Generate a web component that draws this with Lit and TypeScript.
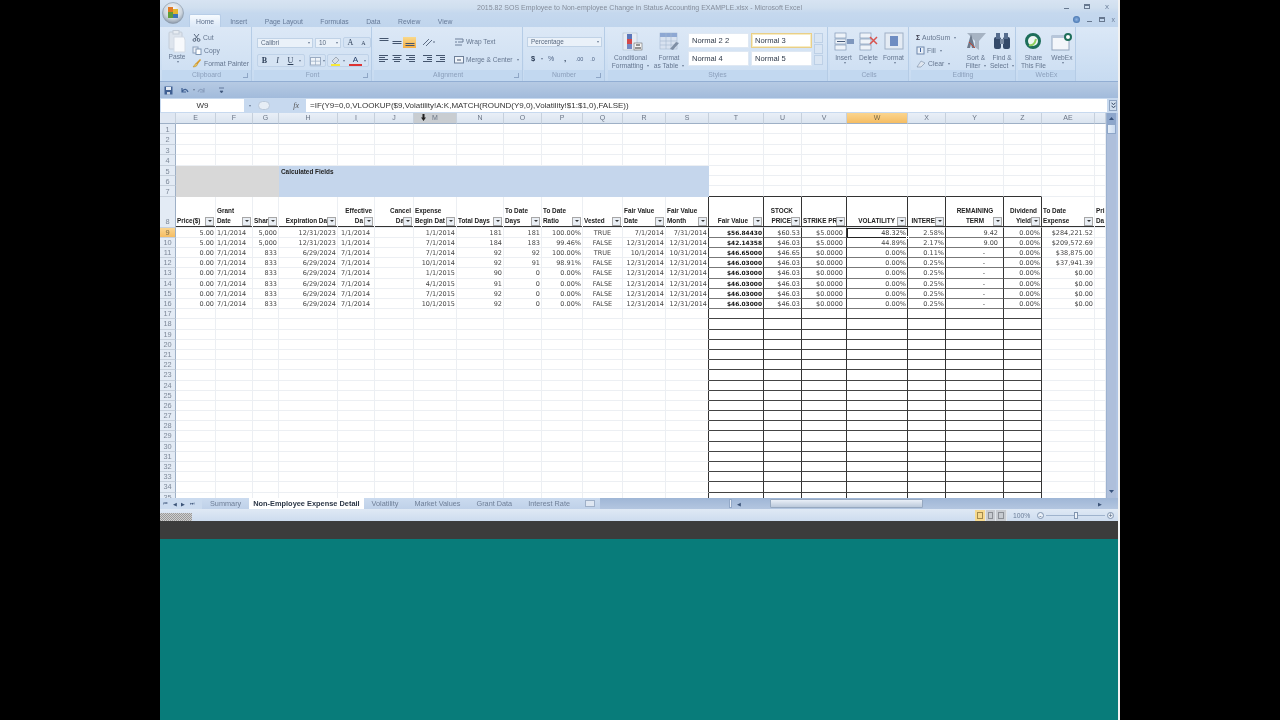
import { LitElement, html, css, svg, nothing } from "lit";
import { customElement } from "lit/decorators.js";
import { classMap } from "lit/directives/class-map.js";

// column letter, width, body alignment
const COLS: [string, number, string][] = [
  ["E", 40, "r"], ["F", 37, "l"], ["G", 26, "r"], ["H", 59, "r"], ["I", 37, "i"], ["J", 39, "r"],
  ["M", 43, "r"], ["N", 47, "r"], ["O", 38, "r"], ["P", 41, "r"], ["Q", 40, "c"], ["R", 43, "r"],
  ["S", 43, "r"], ["T", 55, "r"], ["U", 38, "r"], ["V", 45, "v"], ["W", 61, "r"], ["X", 38, "r"],
  ["Y", 58, "y"], ["Z", 38, "r"], ["AE", 53, "r"], ["", 11, "l"],
];

// text, alignment, right padding of the upper line, right padding of the last line
const HEADERS: [string, string, number, number][] = [
  ["Price($)", "left", 1, 1], ["Grant\nDate", "left", 1, 1], ["Shar", "left", 1, 1], ["Expiration Da", "right", 10, 10], ["Effective\nDa", "right", 2, 11],
  ["Cancel\nDa", "right", 2, 9], ["Expense\nBegin Dat", "left", 1, 1], ["Total Days", "left", 1, 1], ["To Date\nDays", "left", 1, 1],
  ["To Date\nRatio", "left", 1, 1], ["Vested", "left", 1, 1], ["Fair Value\nDate", "left", 1, 1], ["Fair Value\nMonth", "left", 1, 1],
  ["Fair Value", "right", 15, 15], ["STOCK\nPRICE", "right", 8, 10], ["STRIKE PRI", "left", 1, 1], ["VOLATILITY", "right", 12, 12], ["INTERE", "right", 10, 10],
  ["REMAINING\nTERM", "center", 0, 0], ["Dividend\nYield", "right", 4, 10], ["To Date\nExpense", "left", 1, 1], ["Pri\nDa", "left", 1, 1],
];

const grant = ["0.00", "7/1/2014", "833", "6/29/2024", "7/1/2014", ""];
const fair = ["12/31/2014", "12/31/2014", "$46.03000", "$46.03", "$0.0000", "0.00%", "0.25%", "-", "0.00%"];
const ROWS: string[][] = [
  ["5.00", "1/1/2014", "5,000", "12/31/2023", "1/1/2014", "", "1/1/2014", "181", "181", "100.00%", "TRUE", "7/1/2014", "7/31/2014", "$56.84430", "$60.53", "$5.0000", "48.32%", "2.58%", "9.42", "0.00%", "$284,221.52", ""],
  ["5.00", "1/1/2014", "5,000", "12/31/2023", "1/1/2014", "", "7/1/2014", "184", "183", "99.46%", "FALSE", "12/31/2014", "12/31/2014", "$42.14358", "$46.03", "$5.0000", "44.89%", "2.17%", "9.00", "0.00%", "$209,572.69", ""],
  [...grant, "7/1/2014", "92", "92", "100.00%", "TRUE", "10/1/2014", "10/31/2014", "$46.65000", "$46.65", "$0.0000", "0.00%", "0.11%", "-", "0.00%", "$38,875.00", ""],
  [...grant, "10/1/2014", "92", "91", "98.91%", "FALSE", ...fair, "$37,941.39", ""],
  [...grant, "1/1/2015", "90", "0", "0.00%", "FALSE", ...fair, "$0.00", ""],
  [...grant, "4/1/2015", "91", "0", "0.00%", "FALSE", ...fair, "$0.00", ""],
  [...grant, "7/1/2015", "92", "0", "0.00%", "FALSE", ...fair, "$0.00", ""],
  [...grant, "10/1/2015", "92", "0", "0.00%", "FALSE", ...fair, "$0.00", ""],
];

const TABS = ["Home", "Insert", "Page Layout", "Formulas", "Data", "Review", "View"];
const SHEETS = ["Summary", "Non-Employee Expense Detail", "Volatility", "Market Values", "Grant Data", "Interest Rate"];
const BOX_START = 13; // column T
const BOX_END = 19; // column Z

const ico = (w: number, h: number, body: unknown) =>
  html`<svg width=${w} height=${h} viewBox="0 0 ${w} ${h}" style="display:block;flex:none">${body}</svg>`;

const lines = (rows: [number, number][], color = "#44556e", top = 1) =>
  ico(10, 9, rows.map(([x, y], i) => svg`<rect x=${(10 - x) * y} y=${top + i * 2} width=${x} height="1" fill=${color}/>`));

const paste = ico(20, 23, svg`
  <rect x="2" y="2" width="13" height="17" rx="1" fill="#dde4ed" stroke="#c3ccd8"/>
  <rect x="6" y=".5" width="6" height="3.500" fill="#e7ecf2" stroke="#c3ccd8"/>
  <path d="M7 7h10l1 3v12H7z" fill="#f7f9fc" stroke="#d3dbe5"/>`);
const scissors = ico(9, 9, svg`<path d="M2 1l4 5M7 1L3 6" stroke="#5a6a80" fill="none"/><circle cx="2.400" cy="7" r="1.400" fill="none" stroke="#5a6a80"/><circle cx="6.600" cy="7" r="1.400" fill="none" stroke="#5a6a80"/>`);
const copy = ico(10, 9, svg`<rect x="1" y="1" width="5" height="6" fill="#e9eef6" stroke="#8ba0bb"/><rect x="4" y="3" width="5" height="5.500" fill="#fff" stroke="#7e96b4"/>`);
const brush = ico(10, 10, svg`<path d="M8 1L4 5l1.500 1.500L9 2z" fill="#d99a2b"/><path d="M4 5L1 9c2 0 4-.6 4.500-2.500z" fill="#e8c15a" stroke="#a57a20" stroke-width=".4"/>`);
const table = (c = "#7c93b2") => ico(11, 10, svg`<rect x=".5" y="1.500" width="10" height="7.500" fill="#eef3f9" stroke=${c}/><path d="M.5 5.200h10M5.500 1.500v7.500" stroke=${c} stroke-width=".7"/>`);
const condFmt = ico(24, 22, svg`<rect x="4" y="1" width="14" height="17" fill="#e5ebf3" stroke="#a8b6c8" stroke-width=".5"/>
  <rect x="8" y="2" width="5" height="5" fill="#5b76ba"/><rect x="8" y="7" width="5" height="5" fill="#d4474a"/><rect x="8" y="12" width="5" height="5" fill="#7387c4"/>
  <rect x="15" y="11" width="8" height="7" fill="#f4f4f4" stroke="#555" stroke-width=".5"/><path d="M16 16h6M17 13h4" stroke="#333"/>`);
const fmtTable = ico(26, 22, svg`<rect x="4" y="1" width="17" height="16" fill="#d8e2f0" stroke="#9db0c9" stroke-width=".5"/>
  <rect x="4" y="1" width="17" height="4" fill="#8ea8d3"/>
  <path d="M4 9h17M4 13h17M10 1v16M15 1v16" stroke="#a5b8d2" stroke-width=".6"/>
  <path d="M14 17l6-7 3 1-6 7z" fill="#7f8fa5"/>`);
const cellsIcon = (mark: unknown) => ico(20, 22, svg`
  <rect x="1" y="1" width="11" height="5" fill="#eef3f9" stroke="#8097b6" stroke-width=".7"/>
  <rect x="1" y="7" width="11" height="5" fill="#eef3f9" stroke="#8097b6" stroke-width=".7"/>
  <rect x="1" y="13" width="11" height="5" fill="#eef3f9" stroke="#8097b6" stroke-width=".7"/>${mark}`);
const sort = ico(22, 20, svg`<path d="M2 1h19l-7 8v9l-4-3V9z" fill="#a6b3c3"/><path d="M6 2L2 16h3l1-4 1 4h3z" fill="#6d7a8c"/><path d="M4 10l6 6" stroke="#c8452f"/>`);
const find = ico(20, 20, svg`<rect x="2" y="5" width="7" height="12" rx="2" fill="#344a6a"/><rect x="11" y="5" width="7" height="12" rx="2" fill="#344a6a"/><rect x="4" y="1" width="4" height="6" fill="#566d8e"/><rect x="12" y="1" width="4" height="6" fill="#566d8e"/><rect x="8" y="7" width="4" height="5" fill="#7a8ba3"/>`);
const share = ico(24, 22, svg`<circle cx="12" cy="9" r="6.500" fill="#eef5f3" stroke="#1e6e5a" stroke-width="3"/><path d="M8 13c3 1 6-1 7-6" stroke="#8fcf5f" fill="none" stroke-width="2"/>`);
const webex = ico(26, 22, svg`<rect x="3" y="4" width="17" height="14" fill="#f3f6fa" stroke="#93a5bd"/><rect x="3" y="4" width="17" height="2" fill="#b7c6da"/><circle cx="19" cy="5" r="3" fill="#fff" stroke="#1e6e5a" stroke-width="2"/>`);
const office = ico(22, 22, svg`<defs><radialGradient id="orb" cx=".5" cy=".35" r=".7"><stop offset="0" stop-color="#fbfbfb"/><stop offset=".6" stop-color="#cdd6df"/><stop offset="1" stop-color="#7f8d9e"/></radialGradient></defs>
  <circle cx="11" cy="11" r="10.500" fill="url(#orb)" stroke="#8593a5" stroke-width=".6"/>
  <rect x="6" y="5" width="5" height="5" fill="#e07b28"/><rect x="11" y="7" width="5" height="5" fill="#e3b62f"/><rect x="6" y="10" width="5" height="6" fill="#5f9c3a"/><rect x="11" y="12" width="5" height="4" fill="#3e74b8"/>`);
const caret = html`<i class="caret"></i>`;

@customElement("app-root")
export class AppRoot extends LitElement {
  static styles = css`
    :host { display: block; width: 1280px; height: 720px; overflow: hidden; background: #000; font-family: "Liberation Sans", Arial, sans-serif; }
    .screen { margin-left: 160px; width: 960px; display: flex; }
    .window { width: 958px; height: 720px; display: flex; flex-direction: column; position: relative; filter: blur(0.42px); flex: none; background: #c8daf0; }
    .edge { width: 1.500px; height: 720px; background: #f2f2f2; flex: none; }

    .title { height: 13px; flex: none; background: linear-gradient(#d7e3f2, #d0dfef 60%, #c5d8ee); display: flex; align-items: center; position: relative; }
    .title-text { flex: 1; text-align: center; font-size: 7px; color: #858d9b; padding: 2px 0 0 55px; white-space: nowrap; }
    .win-btns { display: flex; gap: 15px; padding-right: 9px; color: #6c7f9a; font-size: 8px; line-height: 10px; align-items: center; }
    .min { width: 5px; height: 1.500px; background: #67788f; margin-top: 4px; }
    .max { width: 6px; height: 5px; border: 1px solid #67788f; border-top-width: 2px; box-sizing: border-box; }
    .orb { position: absolute; left: 2px; top: 2px; z-index: 2; }

    .tabs { height: 14px; flex: none; display: flex; align-items: flex-end; padding-left: 29px; background: linear-gradient(#c5d8ee, #c0d5ed); position: relative; }
    .tab { font-size: 6.800px; color: #667a98; padding: 0 6px; height: 12px; line-height: 13px; margin-right: 5.500px; white-space: nowrap; }
    .tab.on { background: linear-gradient(#f7fbff, #dbe8f7); border: 1px solid #b7cde7; border-bottom: 0; border-radius: 2px 2px 0 0; color: #5a6d8a; margin-right: 3px; }
    .win-btns2 { position: absolute; right: 3px; top: 3px; display: flex; gap: 7px; align-items: center; color: #6c7f9a; font-size: 7px; }
    .help { width: 7px; height: 7px; border-radius: 50%; background: radial-gradient(#8fb4e3, #2d5f9e); }

    .ribbon { height: 55px; flex: none; display: flex; gap: 2px; padding: 0 2px; box-sizing: border-box; background: linear-gradient(#dbe8f7, #c7dbf1); border-bottom: 1px solid #92aed3; }
    .group { display: flex; flex-direction: column; border-right: 1px solid #b5cce6; background: linear-gradient(#dce8f6, #ccdef2); flex: none; box-sizing: border-box; }
    .body { flex: 1; display: flex; min-height: 0; font-size: 6.800px; color: #65768f; white-space: nowrap; }
    .label { height: 11px; flex: none; line-height: 10px; text-align: center; font-size: 6.800px; color: #8ca0bc; background: #c2d8f0; position: relative; }
    .launch { position: absolute; right: 3px; top: 3px; width: 4px; height: 4px; border: 1px solid #8ea6c6; border-left-width: 0; border-top-width: 0; }
    .col { display: flex; flex-direction: column; }
    .row { display: flex; align-items: center; gap: 2px; }
    .big { display: flex; flex-direction: column; align-items: center; line-height: 8px; text-align: center; font-size: 6.600px; flex: none; }
    .caret { display: inline-block; width: 0; height: 0; border: 1.500px solid transparent; border-top: 2px solid #6b7c95; border-bottom: 0; vertical-align: middle; margin-left: 2px; }
    .paste { width: 24px; margin: 3px 3px 0 3px; }
    .clip { padding-top: 4.500px; gap: 2px; }
    .clip .row { height: 11px; gap: 2px; font-size: 6.800px; }
    .select { background: #eaf1f9; border: 1px solid #c0d2e6; height: 10px; box-sizing: border-box; line-height: 8px; font-size: 6.400px; color: #5a6a80; padding-left: 3px; display: flex; justify-content: space-between; align-items: center; padding-right: 2px; }
    .btnrow { display: flex; align-items: center; height: 13px; gap: 0; background: #d5e3f3; border: 1px solid #bfd2e8; border-radius: 2px; box-sizing: border-box; }
    .b { width: 13px; height: 11px; display: flex; align-items: center; justify-content: center; font-size: 8px; color: #2e3f58; font-family: "Liberation Serif", serif; }
    .b.on { background: linear-gradient(#f9d98c, #f5ae45); }
    .font-body { flex-direction: column; padding: 10px 0 0 3px; gap: 6px; }
    .align-body { padding: 10px 0 0 3px; gap: 8px; }
    .wrap-col { padding-top: 0; gap: 9px; font-size: 6.600px; }
    .num-body { flex-direction: column; padding: 10px 0 0 3px; gap: 6px; }
    .styles-body { padding-top: 5px; }
    .gallery { display: grid; grid-template-columns: 61px 61px; grid-auto-rows: 15px; gap: 3px 2px; margin: 1px 0 0 1px; font-size: 7.600px; color: #2f3a4a; }
    .style { background: #fff; border: 1px solid #dfe8f3; line-height: 13px; padding-left: 3px; box-sizing: border-box; }
    .style.on { border-color: #e9cf88; box-shadow: inset 0 0 0 1px #f8ecc2; }
    .gal-btns { display: flex; flex-direction: column; width: 9px; margin: 1px 0 0 2px; gap: 1px; }
    .gal-btns i { height: 10px; display: block; background: #d9e5f3; border: 1px solid #bdd0e6; box-sizing: border-box; }
    .cells-body { padding: 5px 0 0 1px; }
    .cells-body .big { width: 25px; }
    .edit-body { padding: 4px 0 0 5px; }
    .edit-col { width: 49px; font-size: 6.800px; }
    .edit-col .row { height: 13px; }
    .edit-big { width: 22px; padding-top: 1px; }
    .edit-big svg { margin-bottom: 2px; }
    .webex-body { padding: 5px 0 0 3px; gap: 3px; }
    .qat { height: 16px; flex: none; display: flex; align-items: center; gap: 7px; padding-left: 4px; background: linear-gradient(#b6cae3, #a2bbdb); }
    .formula { height: 15px; flex: none; display: flex; align-items: center; background: #c7d9ef; font-size: 8px; color: #333; padding: 1px 0; box-sizing: border-box; }
    .namebox { width: 83px; height: 13px; background: #fff; line-height: 13px; text-align: center; flex: none; color: #333; box-sizing: border-box; margin-left: 1px; }
    .namearrow { width: 10px; flex: none; text-align: center; }
    .fxwrap { width: 52px; flex: none; display: flex; justify-content: space-between; align-items: center; padding: 0 7px 0 4px; box-sizing: border-box; font: italic 8px "Liberation Serif", serif; color: #555; }
    .pill { width: 12px; height: 9px; background: #e6edf5; border: 1px solid #b9c8da; border-radius: 5px; box-sizing: border-box; }
    .ftext { flex: 1; height: 13px; background: #fff; line-height: 13px; padding-left: 4px; white-space: nowrap; overflow: hidden; }
    .fexpand { width: 8px; height: 11px; background: #d0deee; border: 1px solid #8ea4c2; flex: none; margin: 0 1px 0 2px; box-sizing: border-box; display: flex; align-items: center; justify-content: center; }

    .main { height: 385px; flex: none; display: flex; }
    .sheet { width: 946px; flex: none; display: flex; flex-direction: column; overflow: hidden; background: #fff; font-family: "DejaVu Sans", Verdana, sans-serif; font-size: 6.500px; color: #444; }
    .line { display: flex; flex: none; box-sizing: border-box; }
    .hd { height: 11px; background: linear-gradient(#e9eff7, #d9e3ef); }
    .hd .c { border-right: 1px solid #c6d0dc; border-bottom: 1px solid #9eb0c6; text-align: center; font: 7px/10px "Liberation Sans", sans-serif; color: #6a7484; }
    .hd .c.sel { background: linear-gradient(#fbd58f, #f5bd63); color: #7c6a45; }
    .hd .c.hov { background: #c9cdd1; }
    .hd .rh { background: #dfe7f2; }
    .down { position: absolute; left: 7px; top: 1px; }
    .c { flex: none; box-sizing: border-box; white-space: nowrap; overflow: hidden; border-right: 1px solid #eceff3; border-bottom: 1px solid #eceff3; padding: 0 1px; position: relative; line-height: 10px; }
    .rh { width: 16px; text-align: center; background: #e3ebf5; border-right: 1px solid #9eb0c6; border-bottom: 1px solid #c6d0dc; font: 7.400px/10px "Liberation Sans", sans-serif; color: #7d8898; padding: 0; flex: none; box-sizing: border-box; }
    .rh.sel { background: linear-gradient(#fbd58f, #f5bd63); color: #7c6a45; }
    .rh.tall { padding-top: 20px; }
    .upper, .upper .rh { line-height: 11px; }
    .r { text-align: right; }
    .l { text-align: left; }
    .i { text-align: left; padding-left: 3px; }
    .v { text-align: right; padding-right: 3px; }
    .cc { text-align: center; }
    .y { text-align: right; padding-right: 5px; }
    .dash { padding-right: 18px; }
    .gray { background: #d8d8d8; border-color: #d8d8d8; }
    .blue { background: #c5d6ec; border-color: #c5d6ec; }
    .over { overflow: visible; font: 700 6.400px/11px "Liberation Sans", sans-serif; color: #222; padding-left: 2px; }
    .hc { height: 100%; display: flex; flex-direction: column; justify-content: flex-end; font: 700 6.400px/10px "Liberation Sans", sans-serif; color: #222; white-space: pre; border-bottom: 1px solid #333; box-sizing: border-box; }
    .hl { padding-left: 1px; overflow: hidden; }
    .filter { position: absolute; right: 1px; bottom: 1px; width: 9px; height: 9px; background: #e9eef4; border: 1px solid #a7a7a7; box-sizing: border-box; }
    .filter::after { content: ""; position: absolute; left: 1.500px; top: 2.500px; border: 2px solid transparent; border-top: 2px solid #333; }
    .bold { font-weight: 700; color: #111; font-size: 5.900px; }
    .boxR { border-right: 1px solid #333; }
    .boxB { border-bottom: 1px solid #777; }
    .boxB2 { border-bottom: 1px solid #444; }
    .top { border-bottom: 1px solid #333; }
    .cur { outline: 1.500px solid #222; outline-offset: -1px; z-index: 1; overflow: visible; color: #333; }
    .cur::after { content: ""; position: absolute; right: -2px; bottom: -2px; width: 3px; height: 3px; background: #222; border: 1px solid #fff; box-sizing: border-box; }
    .vscroll { width: 10px; flex: none; display: flex; flex-direction: column; align-items: stretch; background: #aebfdb; border-left: 1px solid #9db2d0; box-sizing: border-box; }
    .vbtn { height: 11px; background: #8da6cb; display: flex; align-items: center; justify-content: center; flex: none; }
    .vthumb { height: 10px; background: linear-gradient(90deg, #e6eff9, #c9daf0); border: 1px solid #8ea6c8; box-sizing: border-box; flex: none; }
    .vend { margin-top: auto; margin-bottom: 1px; height: 11px; display: flex; align-items: center; justify-content: center; flex: none; }
    .frame-r { width: 2px; flex: none; background: #b0c4e2; }

    .sheetbar { height: 11px; flex: none; display: flex; align-items: center; background: linear-gradient(#9fb6d6, #b3c6e0); font-size: 7px; color: #6f7f97; position: relative; }
    .nav { width: 42px; flex: none; display: flex; gap: 4.500px; padding-left: 3px; box-sizing: border-box; align-items: center; font-size: 5px; color: #3c5478; background: #cbdbef; height: 100%; }
    .sheets { display: flex; width: 398px; flex: none; height: 100%; align-items: center; background: linear-gradient(#cbdbef, #bfd1e9); overflow: hidden; }
    .st { padding: 0 8px; white-space: nowrap; line-height: 11px; font-size: 7.300px; }
    .st.on { background: #fff; color: #2c3747; font-weight: 700; padding: 0 4px; font-size: 7.400px; }
    .newsheet { width: 10px; height: 7px; margin-left: 7px; background: #dfe7f2; border: 1px solid #9fb0c8; box-sizing: border-box; flex: none; }
    .split { width: 3px; height: 9px; background: #e8eef6; margin-left: 129px; flex: none; border: 1px solid #92a8c7; box-sizing: border-box; }
    .hscroll { flex: 1; display: flex; align-items: center; padding-left: 5px; color: #3c5478; font-size: 5px; }
    .hthumb { width: 153px; height: 9px; margin-left: 29px; background: linear-gradient(#e9eff7, #bcc9db); border: 1px solid #96a8c0; box-sizing: border-box; flex: none; border-radius: 1px; }
    .hend { margin-left: auto; padding-right: 16px; }

    .status { height: 12px; flex: none; display: flex; align-items: center; background: linear-gradient(#dfe9f5, #cddcef); font-size: 6.800px; color: #6a7d98; }
    .grip { width: 32px; height: 8px; flex: none; align-self: flex-end; background: repeating-conic-gradient(#9a9a9a 0 25%, #cfcfcf 0 50%) 0 0 / 2px 2px; }
    .views { margin-left: auto; display: flex; width: 32px; height: 11px; background: #b9bec4; }
    .views i { flex: 1; border-right: 1px solid #e1e6ec; background: #c7cbd0; box-shadow: inset 0 0 0 2px #c7cbd0, inset 0 0 0 3px #8b8f95; }
    .views i.on { background: #f6d98e; box-shadow: inset 0 0 0 2px #f6d98e, inset 0 0 0 3px #a48a4c; }
    .zoom { margin-left: 6px; width: 24px; }
    .round { width: 7px; height: 7px; border: 1px solid #8195b0; border-radius: 50%; background: #e9eff7; box-sizing: border-box; font: 7px/5px "Liberation Sans", sans-serif; text-align: center; color: #475a75; flex: none; }
    .slider { width: 59px; height: 1px; background: #9fb3cd; position: relative; flex: none; margin: 0 2px; }
    .knob { position: absolute; left: 28px; top: -3px; width: 4px; height: 7px; background: #eef3f9; border: 1px solid #8195b0; box-sizing: border-box; }
    .tail { width: 4px; flex: none; }

    .dark { height: 18px; flex: none; background: #3c3c3c; }
    .teal { flex: 1; background: #087c7a; }
  `;

  private cell(col: number, row: number, text: string) {
    const [, w, align] = COLS[col];
    const box = col >= BOX_START && col <= BOX_END;
    const cls = {
      c: true,
      r: align === "r",
      l: align === "l",
      i: align === "i",
      v: align === "v",
      cc: align === "c",
      y: align === "y",
      dash: text === "-",
      bold: box && col === BOX_START,
      boxR: col >= BOX_START - 1 && col <= BOX_END,
      boxB: box && row <= 16,
      boxB2: box && row > 16,
      cur: col === 16 && row === 9,
    };
    return html`<div class=${classMap(cls)} style="width:${w}px">${text}</div>`;
  }

  private bodyRow(row: number, values?: string[]) {
    return html`<div class="line" style="height:10.200px">
      <div class="rh ${row === 9 ? "sel" : ""}">${row}</div>
      ${COLS.map((_, i) => this.cell(i, row, values ? values[i] : ""))}
    </div>`;
  }

  // rows 1-7 hold only the grey and blue banners
  private topRow(row: number) {
    return html`<div class="line upper" style="height:10.400px">
      <div class="rh">${row}</div>
      ${COLS.map(([, w], i) => {
        const filled = row >= 5;
        const cls = {
          c: true,
          gray: filled && i < 3,
          blue: filled && i >= 3 && i <= 12,
          over: row === 5 && i === 3,
          top: row === 7 && i >= BOX_START && i <= BOX_END,
        };
        return html`<div class=${classMap(cls)} style="width:${w}px">${row === 5 && i === 3 ? "Calculated Fields" : ""}</div>`;
      })}
    </div>`;
  }

  private headerRow() {
    return html`<div class="line" style="height:31px">
      <div class="rh tall">8</div>
      ${COLS.map(([, w], i) => {
        const [text, align, padTop, padLast] = HEADERS[i];
        const parts = text.split("\n");
        const cls = { c: true, boxR: i >= BOX_START - 1 && i <= BOX_END };
        return html`<div class=${classMap(cls)} style="width:${w}px;padding:0">
          <div class="hc">
            ${parts.map((p, n) => html`<div class="hl" style="text-align:${align};padding-right:${n === parts.length - 1 ? padLast : padTop}px">${p}</div>`)}
          </div>
          ${i < COLS.length - 1 ? html`<span class="filter"></span>` : nothing}
        </div>`;
      })}
    </div>`;
  }

  private ribbon() {
    return html`<div class="ribbon">
      <div class="group" style="width:90px">
        <div class="body">
          <div class="big paste">${paste}<span>Paste</span>${caret}</div>
          <div class="col clip">
            <div class="row">${scissors} Cut</div>
            <div class="row">${copy} Copy</div>
            <div class="row">${brush} Format Painter</div>
          </div>
        </div>
        <div class="label">Clipboard<i class="launch"></i></div>
      </div>
      <div class="group" style="width:118px">
        <div class="body font-body">
          <div class="row">
            <div class="select" style="width:56px">Calibri ${caret}</div>
            <div class="select" style="width:26px">10 ${caret}</div>
            <div class="btnrow" style="height:11px"><span class="b">A</span><span class="b" style="font-size:6px">A</span></div>
          </div>
          <div class="row" style="gap:0">
            <div class="btnrow" style="width:48px">
              <span class="b" style="font-weight:700">B</span><span class="b" style="font-style:italic">I</span><span class="b" style="text-decoration:underline">U</span>${caret}
            </div>
            <div class="btnrow" style="margin-left:4px">${table("#9aabc2")}${caret}</div>
            <div class="btnrow" style="padding:0 2px;margin-left:1px">
              ${ico(11, 11, svg`<path d="M2 6l4-4 3 3-4 4z" fill="#d8dee6" stroke="#7b8794" stroke-width=".6"/><rect x="1" y="9" width="9" height="2" fill="#f6e83a"/>`)}${caret}
              <span class="b" style="color:#28406a;font-family:'Liberation Sans';font-size:8px;border-bottom:2px solid #d33;height:8px;line-height:8px;margin-left:4px;">A</span>${caret}
            </div>
          </div>
        </div>
        <div class="label">Font<i class="launch"></i></div>
      </div>
      <div class="group" style="width:149px">
        <div class="body align-body">
          <div class="col" style="gap:5px">
            <div class="row" style="gap:0">
              <span class="b">${lines([[9, .5], [9, .5]], "#44556e", 0)}</span><span class="b">${lines([[9, .5], [9, .5]], "#44556e", 3)}</span><span class="b on">${lines([[9, .5], [9, .5]], "#44556e", 5)}</span>
              <span class="b" style="margin-left:4px;width:17px">${ico(14, 9, svg`<path d="M1 7l6-6M4 8l6-6" stroke="#5d6d85"/><path d="M11 4h2" stroke="#5d6d85"/>`)}</span>
            </div>
            <div class="row" style="gap:0">
              <span class="b">${lines([[9, 0], [6, 0], [9, 0], [6, 0]])}</span><span class="b">${lines([[9, .5], [6, .5], [9, .5], [6, .5]])}</span><span class="b">${lines([[9, 1], [6, 1], [9, 1], [6, 1]])}</span>
              <span class="b" style="margin-left:4px">${lines([[9, 1], [5, 1], [5, 1], [9, 1]])}</span><span class="b">${lines([[9, 1], [5, 1], [5, 1], [9, 1]])}</span>
            </div>
          </div>
          <div class="col wrap-col">
            <div class="row">${ico(10, 9, svg`<path d="M1 2h8v3H4M1 5h2M1 8h7" stroke="#6d7f98" fill="none"/>`)} Wrap Text</div>
            <div class="row">${ico(10, 9, svg`<rect x=".5" y="1.500" width="9" height="6.500" fill="#eef3f9" stroke="#6d7f98"/><path d="M3 5h4" stroke="#44556e"/>`)} Merge &amp; Center ${caret}</div>
          </div>
        </div>
        <div class="label">Alignment<i class="launch"></i></div>
      </div>
      <div class="group" style="width:81px;margin-left:-1px">
        <div class="body num-body">
          <div class="select" style="width:75px">Percentage ${caret}</div>
          <div class="row" style="gap:0;width:75px">
            <span class="b" style="font-family:'Liberation Sans';font-weight:700;font-size:7.500px;width:12px">$</span>${caret}
            <span class="b" style="font-family:'Liberation Sans';width:16px;font-size:7px;color:#4d6284">%</span>
            <span class="b" style="font-family:'Liberation Sans';width:12px;font-weight:700">,</span>
            <span class="b" style="font-size:5.500px;font-family:'Liberation Sans';margin-left:2px;color:#4d6284">.00</span>
            <span class="b" style="font-size:5.500px;font-family:'Liberation Sans';color:#4d6284">.0</span>
          </div>
        </div>
        <div class="label">Number<i class="launch"></i></div>
      </div>
      <div class="group" style="width:220px;margin-left:1px">
        <div class="body styles-body">
          <div class="big" style="width:41px;margin-left:2px">${condFmt}<span>Conditional</span><span>Formatting ${caret}</span></div>
          <div class="big" style="width:36px">${fmtTable}<span>Format</span><span>as Table ${caret}</span></div>
          <div class="gallery">
            <div class="style">Normal 2 2</div><div class="style on">Normal 3</div>
            <div class="style">Normal 4</div><div class="style">Normal 5</div>
          </div>
          <div class="gal-btns"><i></i><i></i><i></i></div>
        </div>
        <div class="label">Styles</div>
      </div>
      <div class="group" style="width:79px">
        <div class="body cells-body">
          <div class="big">${cellsIcon(svg`<rect x="13" y="7" width="7" height="5" fill="#7f97bd"/><path d="M3 9.500h8" stroke="#4a5e7d"/>`)}<span>Insert</span>${caret}</div>
          <div class="big">${cellsIcon(svg`<path d="M11 5l7 7M18 5l-7 7" stroke="#d9534f" stroke-width="1.500"/>`)}<span>Delete</span>${caret}</div>
          <div class="big">${ico(20, 22, svg`<rect x="1" y="1" width="18" height="16" fill="#e4ebf4" stroke="#9fb0c6"/><rect x="6" y="4" width="8" height="10" fill="#6f8dc2"/>`)}<span>Format</span>${caret}</div>
        </div>
        <div class="label">Cells</div>
      </div>
      <div class="group" style="width:105px">
        <div class="body edit-body">
          <div class="col edit-col">
            <div class="row"><b style="color:#334">Σ</b> AutoSum ${caret}</div>
            <div class="row">${ico(9, 9, svg`<rect x="1" y="1" width="7" height="7" fill="#e9eff7" stroke="#6f88ab"/><path d="M4.500 2v4" stroke="#3d62a0"/>`)} Fill ${caret}</div>
            <div class="row">${ico(10, 9, svg`<path d="M1 8l4-6 4 2-4 4z" fill="#dfe6ef" stroke="#7c8ea6" stroke-width=".6"/>`)} Clear ${caret}</div>
          </div>
          <div class="big edit-big">${sort}<span>Sort &amp;</span><span>Filter ${caret}</span></div>
          <div class="big edit-big" style="margin-left:4px">${find}<span>Find &amp;</span><span>Select ${caret}</span></div>
        </div>
        <div class="label">Editing</div>
      </div>
      <div class="group" style="width:58px">
        <div class="body webex-body">
          <div class="big">${share}<span>Share</span><span>This File</span></div>
          <div class="big">${webex}<span>WebEx</span>${caret}</div>
        </div>
        <div class="label">WebEx</div>
      </div>
    </div>`;
  }

  render() {
    return html`<div class="screen">
      <div class="window">
        <div class="orb">${office}</div>
        <div class="title">
          <div class="title-text">2015.82 SOS Employee to Non-employee Change in Status Accounting EXAMPLE.xlsx - Microsoft Excel</div>
          <div class="win-btns"><i class="min"></i><i class="max"></i><span>x</span></div>
        </div>
        <div class="tabs">
          ${TABS.map((t, i) => html`<div class="tab ${i === 0 ? "on" : ""}">${t}</div>`)}
          <div class="win-btns2"><i class="help"></i><i class="min"></i><i class="max"></i><span>x</span></div>
        </div>
        ${this.ribbon()}
        <div class="qat">
          ${ico(9, 9, svg`<rect x=".5" y=".5" width="8" height="8" fill="#3f5f92"/><rect x="2" y="1" width="5" height="3" fill="#e6ecf5"/><rect x="3" y="6" width="3" height="2.500" fill="#c9d4e4"/>`)}
          ${ico(9, 9, svg`<path d="M2 2v4h4M2 6c2-4 5-3 6 0" fill="none" stroke="#3e5f92" stroke-width="1.200"/>`)}
          <i class="caret" style="margin-left:-3px"></i>
          <span style="margin-left:-5px">${ico(8, 9, svg`<path d="M7 2v4H3M7 6C5 2 2 3 1 6" fill="none" stroke="#8ba0bf" stroke-width="1.200"/>`)}</span>
          <span style="margin-left:7px">${ico(5, 7, svg`<path d="M0 1h5M1 4h3l-1.500 2z" stroke="#40587c" stroke-width=".7" fill="#40587c"/>`)}</span>
        </div>
        <div class="formula">
          <div class="namebox">W9</div>
          <div class="namearrow">${caret}</div>
          <div class="fxwrap"><span class="pill"></span><span>fx</span></div>
          <div class="ftext">=IF(Y9=0,0,VLOOKUP($9,Volatility!A:K,MATCH(ROUND(Y9,0),Volatility!$1:$1,0),FALSE))</div>
          <div class="fexpand">${ico(5, 7, svg`<path d="M.5 1l2 1.500L4.500 1M.5 4l2 1.500L4.500 4" stroke="#2f405c" fill="none"/>`)}</div>
        </div>
        <div class="main">
          <div class="sheet">
            <div class="line hd">
              <div class="c rh" style="width:16px"></div>
              ${COLS.map(([l, w]) => html`<div class="c ${l === "W" ? "sel" : l === "M" ? "hov" : ""}" style="width:${w}px">
                ${l === "M" ? html`<span class="down">${ico(5, 7, svg`<path d="M1.500 0h2v3.500H5L2.500 7 0 3.500h1.500z" fill="#222"/>`)}</span>` : nothing}${l}
              </div>`)}
            </div>
            ${[1, 2, 3, 4, 5, 6, 7].map((r) => this.topRow(r))}
            ${this.headerRow()}
            ${ROWS.map((v, i) => this.bodyRow(9 + i, v))}
            ${Array.from({ length: 19 }, (_, i) => this.bodyRow(17 + i))}
          </div>
          <div class="vscroll">
            <div class="vbtn">${ico(5, 3, svg`<path d="M0 3l2.500-3L5 3z" fill="#37527c"/>`)}</div>
            <div class="vthumb"></div>
            <div class="vend">${ico(5, 3, svg`<path d="M0 0l2.500 3L5 0z" fill="#37527c"/>`)}</div>
          </div>
          <div class="frame-r"></div>
        </div>
        <div class="sheetbar">
          <div class="nav"><span>⏮</span><span>◀</span><span>▶</span><span>⏭</span></div>
          <div class="sheets">
            ${SHEETS.map((s, i) => html`<div class="st ${i === 1 ? "on" : ""}">${s}</div>`)}
            <div class="newsheet"></div>
          </div>
          <div class="split"></div>
          <div class="hscroll">
            <span>◀</span><div class="hthumb"></div><span class="hend">▶</span>
          </div>
        </div>
        <div class="status">
          <div class="grip"></div>
          <div class="views"><i class="on"></i><i></i><i></i></div>
          <div class="zoom">100%</div>
          <div class="round">-</div>
          <div class="slider"><i class="knob"></i></div>
          <div class="round">+</div>
          <div class="tail"></div>
        </div>
        <div class="dark"></div>
        <div class="teal"></div>
      </div>
      <div class="edge"></div>
    </div>`;
  }
}
